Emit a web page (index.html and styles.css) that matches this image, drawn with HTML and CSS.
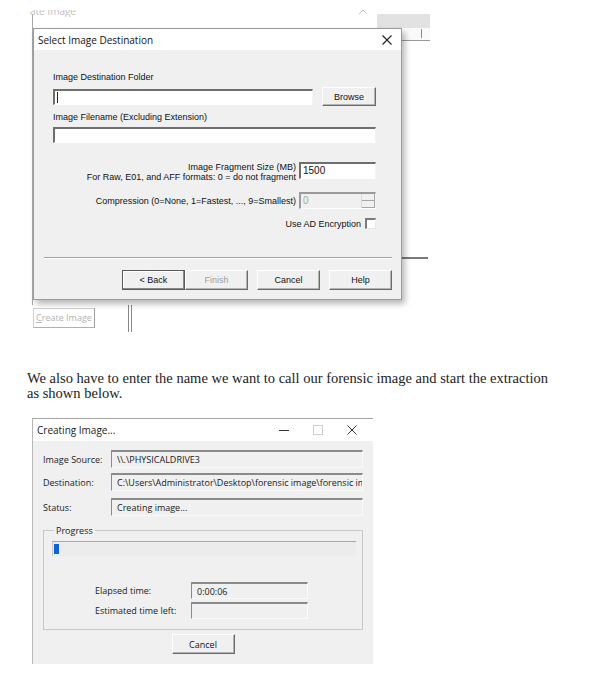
FILE: index.html
```html
<!DOCTYPE html>
<html lang="en">
<head>
  <meta charset="UTF-8" />
  <title>Creating a Forensic Image</title>
  <link rel="stylesheet" href="styles.css">
</head>
<body>

<!-- wizard step: choose where the image goes -->
<div class="shot wizard">
  <div class="bg-head">
    <span class="bg-title"><span>ate Image</span></span>
    <svg class="bg-chevron" width="10" height="6" viewBox="0 0 10 6"><path d="M1 5 L5 1 L9 5" fill="none" stroke="#c8c8c8" stroke-width="1"/></svg>
  </div>
  <div class="bg-main">
    <div class="bg-edge"></div>
    <div class="bg-fill"></div>
    <div class="bg-side">
      <div class="bg-tab"><div class="bg-tab-box"></div></div>
      <div class="bg-rule"></div>
    </div>
  </div>
  <div class="bg-foot">
    <span class="btn-ghost"><u>C</u>reate Image</span>
    <span class="split"></span>
  </div>

  <div class="dialog">
    <div class="titlebar">
      <span>Select Image Destination</span>
      <svg class="close" width="10" height="10" viewBox="0 0 10 10"><path d="M0.5 0.5 L9.5 9.5 M9.5 0.5 L0.5 9.5" stroke="#222" stroke-width="1.1"/></svg>
    </div>
    <div class="dlg-body">
      <div class="fields">
        <div class="label">Image Destination Folder</div>
        <div class="row">
          <div class="input grow"><span class="caret"></span></div>
          <button class="btn">Browse</button>
        </div>
        <div class="label label-gap">Image Filename (Excluding Extension)</div>
        <div class="input wide"></div>

        <div class="opt opt-first">
          <div class="opt-label">Image Fragment Size (MB)<br>For Raw, E01, and AFF formats: 0 = do not fragment</div>
          <div class="input small">1500</div>
        </div>
        <div class="opt opt-comp">
          <div class="opt-label">Compression (0=None, 1=Fastest, ..., 9=Smallest)</div>
          <div class="input small disabled">
            <span>0</span>
            <span class="spin"><span class="spin-up"></span><span class="spin-down"></span></span>
          </div>
        </div>
        <div class="opt opt-enc">
          <div class="opt-label">Use AD Encryption</div>
          <span class="check"></span>
        </div>
      </div>

      <div class="dlg-foot">
        <div class="sep"></div>
        <div class="buttons">
          <button class="btn btn-default">&lt; Back</button>
          <button class="btn btn-off">Finish</button>
          <button class="btn btn-gap">Cancel</button>
          <button class="btn btn-gap">Help</button>
        </div>
      </div>
    </div>
  </div>
</div>

<p class="para">We also have to enter the name we want to call our forensic image and start the extraction as shown below.</p>

<!-- progress window while the image is written -->
<div class="shot win">
  <div class="win-title">
    <span>Creating Image...</span>
    <span class="win-ctrls">
      <svg width="10" height="10" viewBox="0 0 10 10"><path d="M0 5.5 H10" stroke="#333" stroke-width="1"/></svg>
      <svg width="10" height="10" viewBox="0 0 10 10"><rect x="0.5" y="0.5" width="9" height="9" fill="none" stroke="#cfcfcf"/></svg>
      <svg width="10" height="10" viewBox="0 0 10 10"><path d="M0.5 0.5 L9.5 9.5 M9.5 0.5 L0.5 9.5" stroke="#333" stroke-width="1"/></svg>
    </span>
  </div>
  <div class="win-body">
    <div class="info-row"><span class="info-label">Image Source:</span><span class="field">\\.\PHYSICALDRIVE3</span></div>
    <div class="info-row"><span class="info-label">Destination:</span><span class="field">C:\Users\Administrator\Desktop\forensic image\forensic ima</span></div>
    <div class="info-row"><span class="info-label">Status:</span><span class="field">Creating image...</span></div>

    <fieldset class="group">
      <legend>Progress</legend>
      <div class="progress"><div class="progress-fill" style="width: 5px"></div></div>
      <div class="times">
        <div class="time-row"><span class="time-label">Elapsed time:</span><span class="field time-field">0:00:06</span></div>
        <div class="time-row"><span class="time-label">Estimated time left:</span><span class="field time-field"></span></div>
      </div>
    </fieldset>

    <div class="win-foot"><button class="win-btn">Cancel</button></div>
  </div>
</div>

</body>
</html>
```

FILE: styles.css
```css
body {
  margin: 0;
  background: #fff;
  color: #111;
  font-family: 'Liberation Sans', Arial, sans-serif;
}

/* ---------- wizard screenshot ---------- */
.wizard {
  position: relative;
  margin-left: 30px;
  width: 400px;
  height: 332px;
  display: flex;
  flex-direction: column;
  overflow: hidden;
}
.bg-head {
  height: 14px;
  display: flex;
  align-items: flex-end;
  justify-content: space-between;
  padding-right: 62px;
}
/* old title bar, only its lower half shows */
.bg-title {
  height: 7px;
  margin-bottom: -3px;
  overflow: hidden;
  display: flex;
  align-items: flex-end;
  font: 10px 'Open Sans', sans-serif;
  line-height: 11px;
  color: #c0c0c0;
}
.bg-chevron { margin-bottom: -1px; }
.bg-main {
  flex: 1;
  display: flex;
}
.bg-edge {
  width: 1px;
  margin-left: 2px;
  background: #a8a8a8;
}
.bg-fill { flex: 1; }
.bg-side {
  width: 53px;
  display: flex;
  flex-direction: column;
}
.bg-tab {
  height: 26px;
  background: linear-gradient(#e2e2e2 0 14px, #fafafa 14px);
  border-bottom: 1px solid #9a9a9a;
  display: flex;
  justify-content: flex-end;
}
.bg-tab-box {
  width: 4px;
  margin: 15px 4px 2px 0;
  border-left: 1px solid #8a8a8a;
}
.bg-rule {
  margin-top: 216px;
  height: 2px;
  width: 26px;
  margin-left: 25px;
  background: #7a7a7a;
}
.bg-foot {
  height: 27px;
  display: flex;
  align-items: flex-start;
}
.btn-ghost {
  margin: 3px 0 0 3px;
  width: 62px;
  height: 20px;
  box-sizing: border-box;
  border: 1px solid #d0d0d0;
  border-right-color: #9a9a9a;
  border-bottom-color: #b0b0b0;
  font: 9px/18px 'Open Sans', sans-serif;
  color: #b4b4b4;
  text-align: center;
}
.split {
  width: 2px;
  height: 27px;
  margin-left: 33px;
  border-left: 1px solid #888;
  border-right: 1px solid #888;
}

.dialog {
  position: absolute;
  left: 3px;
  top: 28px;
  width: 369px;
  height: 272px;
  box-sizing: border-box;
  border: 1px solid #9c9c9c;
  background: #f0f0f0;
  box-shadow: 3px 4px 6px rgba(0, 0, 0, 0.28);
  display: flex;
  flex-direction: column;
}
.titlebar {
  height: 21px;
  background: #fff;
  display: flex;
  align-items: center;
  justify-content: space-between;
  padding: 0 9px 0 4px;
  font: 10px 'Open Sans', sans-serif;
  color: #111;
}
.dlg-body {
  flex: 1;
  display: flex;
  flex-direction: column;
  font-size: 9px;
  color: #111;
}
.fields {
  padding: 21px 25px 0 19px;
}
.label { line-height: 12px; }
.label-gap { margin-top: 5px; }
.row {
  margin-top: 4px;
  display: flex;
  align-items: center;
  gap: 9px;
}
.input {
  box-sizing: border-box;
  height: 16px;
  background: #fff;
  border-top: 2px solid #6e6e6e;
  border-left: 2px solid #6e6e6e;
  border-right: 1px solid #f4f4f4;
  border-bottom: 1px solid #fff;
  font-size: 10px;
  line-height: 13px;
  padding-left: 2px;
}
.grow { flex: 1; }
.wide { margin-top: 4px; }
.caret {
  display: inline-block;
  width: 1px;
  height: 11px;
  margin-top: 1px;
  background: #222;
}
.btn {
  font: 9px 'Liberation Sans', Arial, sans-serif;
  color: #111;
  background: #f0f0f0;
  height: 20px;
  padding: 0;
  border: 1px solid;
  border-color: #fff #6a6a6a #6a6a6a #fff;
  box-shadow: inset -1px -1px 0 #b4b4b4;
}
.row .btn { width: 54px; height: 19px; }

.opt {
  display: flex;
  justify-content: flex-end;
  align-items: flex-start;
  gap: 3px;
}
.opt-first { margin-top: 19px; }
.opt-comp { margin-top: 10px; align-items: center; }
.opt-enc { margin-top: 9px; align-items: center; }
.opt-label {
  text-align: right;
  line-height: 10px;
}
.small {
  width: 77px;
  height: 17px;
  line-height: 14px;
}
.disabled {
  background: #f0f0f0;
  color: #a8a8a8;
  display: flex;
  justify-content: space-between;
  border-top-color: #9a9a9a;
  border-left-color: #9a9a9a;
}
.spin {
  width: 13px;
  display: flex;
  flex-direction: column;
  border-left: 1px solid #d8d8d8;
}
.spin-up, .spin-down {
  flex: 1;
  border-bottom: 1px solid #a8a8a8;
  border-right: 1px solid #a8a8a8;
}
.check {
  width: 11px;
  height: 11px;
  box-sizing: border-box;
  margin-left: 1px;
  background: #fff;
  border-top: 2px solid #7a7a7a;
  border-left: 2px solid #7a7a7a;
  border-right: 1px solid #e8e8e8;
  border-bottom: 1px solid #e8e8e8;
}

.dlg-foot {
  margin-top: auto;
  padding: 0 9px 9px 10px;
}
.sep {
  height: 1px;
  background: #a2a2a2;
  border-bottom: 1px solid #fff;
}
.buttons {
  margin-top: 11px;
  display: flex;
  justify-content: flex-end;
}
.buttons .btn { width: 63px; }
.btn-default {
  border-color: #5a5a5a;
  box-shadow: inset -1px -1px 0 #888, inset 1px 1px 0 #fff;
}
.btn-off { color: #a0a0a0; }
.btn-gap { margin-left: 9px; }

/* ---------- paragraph ---------- */
.para {
  margin: 39px 0 0 27px;
  width: 528px;
  font: 14.5px/15px 'Liberation Serif', 'Times New Roman', serif;
  color: #222;
}

/* ---------- progress window ---------- */
.win {
  margin: 17px 0 0 32px;
  width: 340px;
  height: 245px;
  border-top: 1px solid #a4a4a4;
  border-left: 1px solid #b8b8b8;
  font: 9px 'Open Sans', sans-serif;
  color: #1a1a1a;
  display: flex;
  flex-direction: column;
}
.win-title {
  height: 22px;
  background: #fff;
  display: flex;
  align-items: center;
  justify-content: space-between;
  padding-left: 4px;
  font-size: 10px;
}
.win-ctrls {
  display: flex;
  align-items: center;
  gap: 24px;
  padding-right: 16px;
}
.win-body {
  flex: 1;
  background: #f0f0f0;
  padding: 9px 10px 0 10px;
}
.info-row {
  display: flex;
  align-items: center;
  height: 18px;
  margin-bottom: 5px;
}
.info-row:nth-child(2) { margin-bottom: 7px; }
.info-label { width: 68px; }
.field {
  flex: 1;
  height: 18px;
  box-sizing: border-box;
  border-top: 2px solid #8a8a8a;
  border-left: 1px solid #8a8a8a;
  border-right: 1px solid #fafafa;
  border-bottom: 1px solid #fafafa;
  padding-left: 5px;
  line-height: 15px;
  white-space: nowrap;
  overflow: hidden;
}
.group {
  margin: 9px 0 0 0;
  padding: 5px 6px 8px 8px;
  border: 1px solid #c8c8c8;
  height: 105px;
  box-sizing: border-box;
}
.group legend {
  padding: 0 2px;
  margin-left: 2px;
  line-height: 11px;
}
.progress {
  height: 15px;
  box-sizing: border-box;
  border-top: 1px solid #a8a8a8;
  border-left: 1px solid #c8c8c8;
  background: #ececec;
  padding: 2px 1px;
}
.progress-fill {
  height: 100%;
  background: #0a64d8;
}
.times {
  margin: 26px 0 0 43px;
}
.time-row {
  display: flex;
  align-items: center;
  height: 17px;
  margin-bottom: 3px;
}
.time-label { width: 96px; }
.time-field {
  flex: none;
  width: 117px;
  height: 17px;
}
.win-foot {
  display: flex;
  justify-content: center;
  margin-top: 4px;
}
.win-btn {
  width: 63px;
  height: 20px;
  font: 9px 'Open Sans', sans-serif;
  color: #111;
  background: #f0f0f0;
  border: 1px solid;
  border-color: #fff #6a6a6a #6a6a6a #fff;
  box-shadow: inset -1px -1px 0 #b4b4b4;
}
```
